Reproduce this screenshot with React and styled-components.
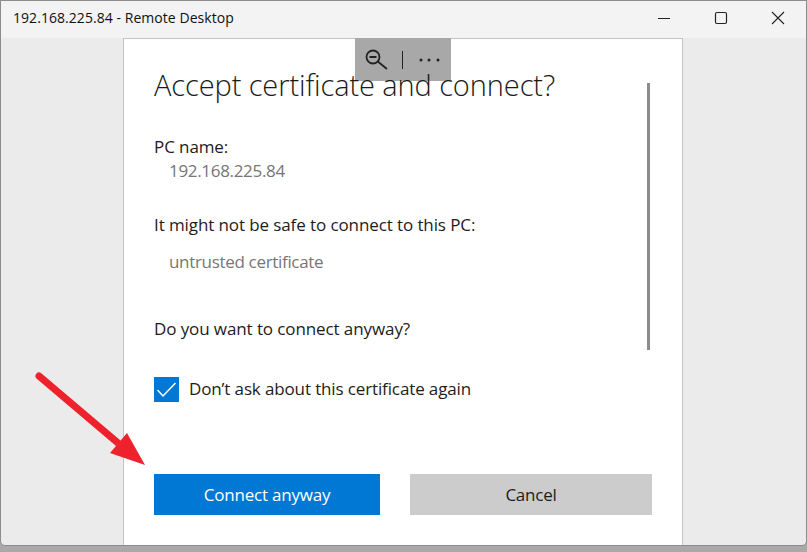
import React from "react";
import styled, { createGlobalStyle } from "styled-components";

const GlobalStyle = createGlobalStyle`
  html, body {
    margin: 0;
    padding: 0;
    background: #a9a9a9;
  }
  body {
    font-family: "Open Sans", "Noto Sans", "Liberation Sans", sans-serif;
  }
`;

const Page = styled.div`
  position: relative;
  width: 807px;
  height: 552px;
  overflow: hidden;
  display: flex;
  flex-direction: column;
  box-sizing: border-box;
  padding-bottom: 6px;
  background: #a9a9a9;
`;

const Frame = styled.div`
  flex: 1;
  display: flex;
  flex-direction: column;
  min-height: 0;
  border: 1px solid #8c8c8c;
  border-radius: 0 0 5px 5px;
  overflow: hidden;
  background: #ebebeb;
`;

const TitleBar = styled.header`
  height: 37px;
  flex: none;
  display: flex;
  align-items: center;
  justify-content: space-between;
  box-sizing: border-box;
  background: #f3f3f3;
  padding: 0 0 4px 12px;
`;

const Title = styled.span`
  font-size: 14px;
  letter-spacing: 0.05px;
  color: #111;
`;

const WindowButtons = styled.div`
  display: flex;
  height: 100%;
`;

const WindowButton = styled.div`
  width: 57px;
  display: flex;
  align-items: center;
  justify-content: center;
`;

const Body = styled.main`
  flex: 1;
  min-height: 0;
  display: flex;
  padding-left: 122px;
`;

const Dialog = styled.section`
  position: relative;
  width: 560px;
  box-sizing: border-box;
  background: #fff;
  border-left: 1px solid #c4c4c4;
  border-right: 1px solid #c4c4c4;
  border-top: 1px solid #c4c4c4;
  padding: 28px 30px 0 30px;
  display: flex;
  flex-direction: column;
`;

const Heading = styled.h1`
  position: relative;
  z-index: 1;
  margin: 0;
  font-size: 29px;
  line-height: 36px;
  font-weight: 300;
  letter-spacing: -0.1px;
  color: #1a1a1a;
`;

const Label = styled.div`
  font-size: 17px;
  line-height: 22px;
  letter-spacing: -0.1px;
  color: #1c1c1c;
  margin-top: ${(p) => p.$top}px;
`;

const Value = styled.div`
  font-size: 17px;
  line-height: 22px;
  letter-spacing: -0.32px;
  color: #767676;
  padding-left: 15px;
  margin-top: ${(p) => p.$top}px;
`;

const CheckRow = styled.label`
  display: flex;
  align-items: center;
  gap: 10px;
  margin-top: 36px;
  font-size: 17px;
  line-height: 26px;
  letter-spacing: -0.13px;
  color: #1c1c1c;
`;

const CheckBox = styled.span`
  width: 25px;
  height: 25px;
  display: flex;
  align-items: center;
  justify-content: center;
  background: #0078d4;
`;

const Actions = styled.div`
  display: flex;
  justify-content: space-between;
  width: 498px;
  margin-top: 72px;
`;

const Button = styled.button`
  height: 41px;
  border: none;
  padding: 0;
  font-family: inherit;
  font-size: 17px;
  letter-spacing: -0.22px;
  background: ${(p) => (p.$primary ? "#0078d4" : "#cccccc")};
  color: ${(p) => (p.$primary ? "#fff" : "#1c1c1c")};
  width: ${(p) => (p.$primary ? 226 : 242)}px;
`;

const ZoomBar = styled.div`
  position: absolute;
  top: -1px;
  left: 231px;
  width: 96px;
  height: 43px;
  box-sizing: border-box;
  padding-left: 9px;
  background: #a8a8a8;
  display: flex;
  align-items: center;
`;

const Divider = styled.span`
  width: 1px;
  height: 18px;
  margin: 0 13px 0 14px;
  background: #222;
`;

const ScrollThumb = styled.div`
  position: absolute;
  top: 44px;
  left: 523px;
  width: 3px;
  height: 267px;
  background: #8c8c8c;
`;

const Arrow = styled.svg`
  position: absolute;
  left: 30px;
  top: 365px;
`;

export default function App() {
  return (
    <>
      <GlobalStyle />
      <Page>
        <Frame>
          <TitleBar>
            <Title>192.168.225.84 - Remote Desktop</Title>
            <WindowButtons>
              <WindowButton>
                <svg width="14" height="14" viewBox="0 0 14 14">
                  <path d="M1 7.5h12" stroke="#222" strokeWidth="1.2" fill="none" />
                </svg>
              </WindowButton>
              <WindowButton>
                <svg width="14" height="14" viewBox="0 0 14 14">
                  <rect x="1.5" y="1.5" width="11" height="11" rx="1.5" stroke="#222" strokeWidth="1.2" fill="none" />
                </svg>
              </WindowButton>
              <WindowButton>
                <svg width="14" height="14" viewBox="0 0 14 14">
                  <path d="M1 1l12 12M13 1L1 13" stroke="#222" strokeWidth="1.1" fill="none" />
                </svg>
              </WindowButton>
            </WindowButtons>
          </TitleBar>
          <Body>
            <Dialog>
              <ZoomBar>
                <svg width="24" height="24" viewBox="0 0 24 24">
                  <circle cx="9" cy="9" r="6.5" stroke="#222" strokeWidth="1.8" fill="none" />
                  <path d="M5.5 9h7M13.8 13.5L23 21" stroke="#222" strokeWidth="1.8" fill="none" />
                </svg>
                <Divider />
                <svg width="26" height="24" viewBox="0 0 26 24">
                  <circle cx="5" cy="12" r="1.5" fill="#222" />
                  <circle cx="13" cy="12" r="1.5" fill="#222" />
                  <circle cx="22" cy="12" r="1.5" fill="#222" />
                </svg>
              </ZoomBar>
              <ScrollThumb />
              <Heading>Accept certificate and connect?</Heading>
              <Label $top={33}>PC name:</Label>
              <Value $top={2}>192.168.225.84</Value>
              <Label $top={32}>It might not be safe to connect to this PC:</Label>
              <Value $top={15}>untrusted certificate</Value>
              <Label $top={45}>Do you want to connect anyway?</Label>
              <CheckRow>
                <CheckBox>
                  <svg width="25" height="25" viewBox="0 0 25 25">
                    <path d="M3.5 13l5.5 6L21.5 6" stroke="#fff" strokeWidth="1.5" fill="none" />
                  </svg>
                </CheckBox>
                Don’t ask about this certificate again
              </CheckRow>
              <Actions>
                <Button $primary>Connect anyway</Button>
                <Button>Cancel</Button>
              </Actions>
            </Dialog>
          </Body>
        </Frame>
        <Arrow width="130" height="110" viewBox="0 0 130 110">
          <path d="M9 11L88 78" stroke="#ee222c" strokeWidth="7" strokeLinecap="round" fill="none" />
          <path d="M97 68L115 100L80 88Z" fill="#ee222c" />
        </Arrow>
      </Page>
    </>
  );
}
